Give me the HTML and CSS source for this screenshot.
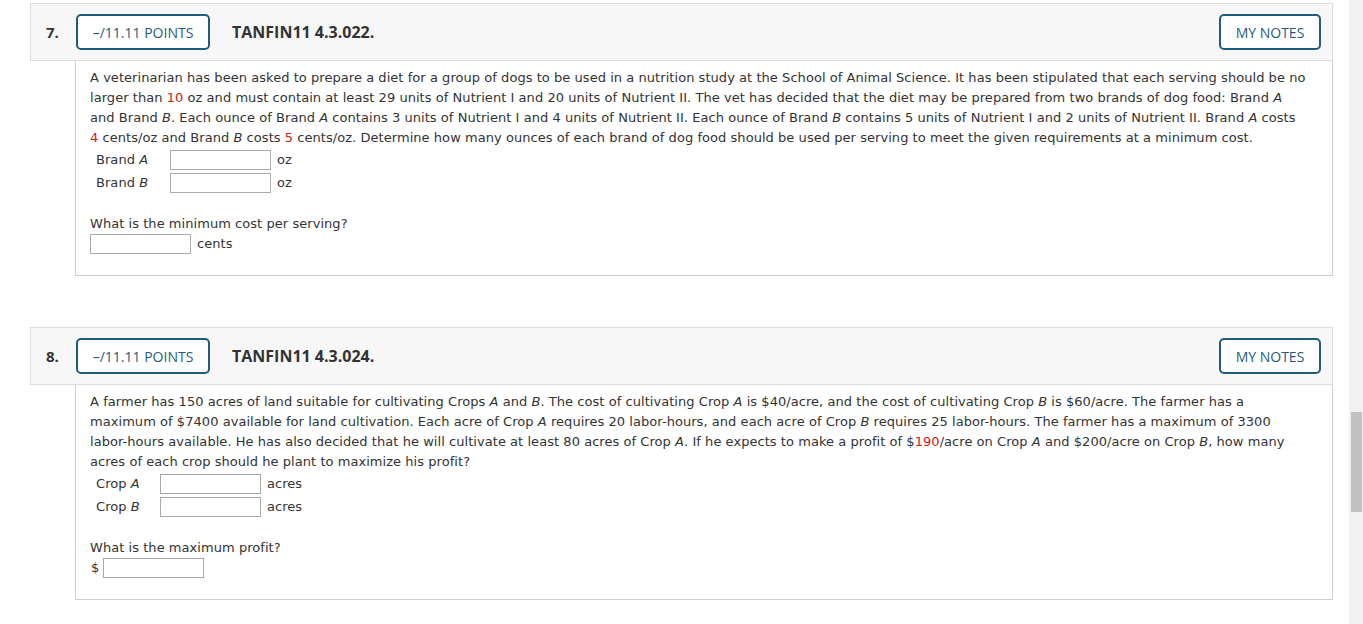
FILE: index.html
```html
<!DOCTYPE html>
<html>
<head>
<meta charset="utf-8">
<link rel="stylesheet" href="styles.css">
</head>
<body>
<div class="layout">
  <main class="main">
    <section class="question">
      <div class="q-header">
        <span class="q-num">7.</span>
        <span class="btn points">–/11.11 POINTS</span>
        <span class="q-title">TANFIN11 4.3.022.</span>
        <span class="btn notes">MY NOTES</span>
      </div>
      <div class="q-body">
        <p class="prompt">A veterinarian has been asked to prepare a diet for a group of dogs to be used in a nutrition study at the School of Animal Science. It has been stipulated that each serving should be no larger than <span class="red">10</span> oz and must contain at least 29 units of Nutrient I and 20 units of Nutrient II. The vet has decided that the diet may be prepared from two brands of dog food: Brand <i>A</i> and Brand <i>B</i>. Each ounce of Brand <i>A</i> contains 3 units of Nutrient I and 4 units of Nutrient II. Each ounce of Brand <i>B</i> contains 5 units of Nutrient I and 2 units of Nutrient II. Brand <i>A</i> costs <span class="red">4</span> cents/oz and Brand <i>B</i> costs <span class="red">5</span> cents/oz. Determine how many ounces of each brand of dog food should be used per serving to meet the given requirements at a minimum cost.</p>
        <div class="answers wide">
          <div class="ans-row"><span class="ans-label">Brand <i>A</i></span><span class="input"></span><span class="unit">oz</span></div>
          <div class="ans-row"><span class="ans-label">Brand <i>B</i></span><span class="input"></span><span class="unit">oz</span></div>
        </div>
        <p class="sub-q">What is the minimum cost per serving?</p>
        <div class="single"><span class="input"></span><span class="unit">cents</span></div>
      </div>
    </section>

    <section class="question">
      <div class="q-header">
        <span class="q-num">8.</span>
        <span class="btn points">–/11.11 POINTS</span>
        <span class="q-title">TANFIN11 4.3.024.</span>
        <span class="btn notes">MY NOTES</span>
      </div>
      <div class="q-body">
        <p class="prompt">A farmer has 150 acres of land suitable for cultivating Crops <i>A</i> and <i>B</i>. The cost of cultivating Crop <i>A</i> is $40/acre, and the cost of cultivating Crop <i>B</i> is $60/acre. The farmer has a maximum of $7400 available for land cultivation. Each acre of Crop <i>A</i> requires 20 labor-hours, and each acre of Crop <i>B</i> requires 25 labor-hours. The farmer has a maximum of 3300 labor-hours available. He has also decided that he will cultivate at least 80 acres of Crop <i>A</i>. If he expects to make a profit of $<span class="red">190</span>/acre on Crop <i>A</i> and $200/acre on Crop <i>B</i>, how many acres of each crop should he plant to maximize his profit?</p>
        <div class="answers narrow">
          <div class="ans-row"><span class="ans-label">Crop <i>A</i></span><span class="input"></span><span class="unit">acres</span></div>
          <div class="ans-row"><span class="ans-label">Crop <i>B</i></span><span class="input"></span><span class="unit">acres</span></div>
        </div>
        <p class="sub-q">What is the maximum profit?</p>
        <div class="single"><span class="prefix">$</span><span class="input"></span></div>
      </div>
    </section>
  </main>
  <div class="scrollbar"><div class="thumb"></div></div>
</div>
</body>
</html>
```

FILE: styles.css
```css
* { box-sizing: border-box; }
html, body { margin: 0; padding: 0; background: #fff; }
body { font-family: "DejaVu Sans", Verdana, sans-serif; font-size: 13px; color: #333; overflow: hidden; }

.layout { display: flex; height: 624px; }
.main { flex: 1; padding: 3px 16px 0 30px; }

.scrollbar { width: 14px; background: #f1f1f1; padding-top: 412px; }
.thumb { height: 100px; margin: 0 1px 0 2px; background: #c1c1c1; }

.question + .question { margin-top: 51px; }

.q-header {
  display: flex; align-items: center;
  height: 58px;
  background: #f7f7f7;
  border: 1px solid #dcdcdc;
  font-family: "Open Sans", sans-serif;
  padding-right: 11px;
}
.q-num { width: 45px; padding-left: 15px; font-weight: 700; font-size: 15px; color: #333; }
.btn {
  display: flex; align-items: center; justify-content: center;
  height: 36px;
  border: 2px solid #1f5c7b;
  border-radius: 5px;
  color: #1f5c7b;
  font-size: 14px;
  background: #fff;
}
.points { width: 134px; }
.q-title { margin-left: 22px; font-weight: 700; font-size: 16px; color: #333; flex: 1; }
.notes { width: 102px; }

.q-body {
  margin-left: 45px;
  border: 1px solid #cfcfcf;
  border-top: none;
  padding: 7px 26px 21px 14px;
  line-height: 20px;
  letter-spacing: 0.05px;
}
.q-body p { margin: 0; }
.red { color: #d0201a; }

.ans-row { display: flex; align-items: center; height: 23px; }
.ans-label { padding-left: 6px; }
.wide .ans-label { width: 80px; }
.narrow .ans-label { width: 70px; }
.input { display: inline-block; width: 101px; height: 20px; border: 1px solid #a9a9a9; background: #fff; }
.unit { margin-left: 6px; }
.sub-q { margin-top: 20px !important; }
.single { display: flex; align-items: center; height: 20px; }
.prefix { width: 13px; padding-left: 1px; }
```
